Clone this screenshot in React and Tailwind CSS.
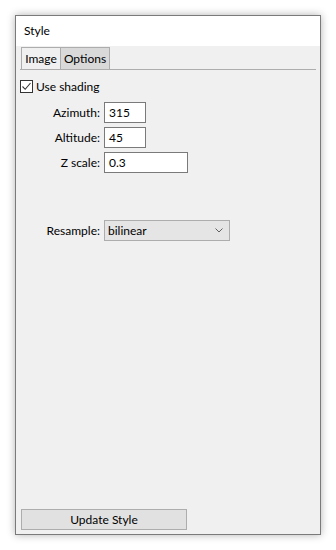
import React from "react";

const Field = ({ label, value, width }) => (
  <div className="flex items-center h-[21px]">
    <div className="w-[84px] pr-[4px] text-right">{label}</div>
    <div className={`${width} h-[21px] bg-white border border-[#7a7a7a] pl-[4px] flex items-center`}>{value}</div>
  </div>
);

const App = () => {
  return (
    <div
      className="w-[336px] h-[550px] bg-white pt-[15px] pl-[15px] text-[12px] text-black"
      style={{ fontFamily: 'Lato, sans-serif' }}
    >
      <div className="w-[306px] h-[520px] border border-[#7a7a7a] bg-[#f0f0f0] shadow-[0_0_8px_rgba(0,0,0,0.3)] flex flex-col">
        {/* title */}
        <div className="h-[30px] bg-white pl-[8px] flex items-center">Style</div>

        <div className="flex-1 flex flex-col px-[4px] pt-[1px] pb-[4px]">
          {/* tabs */}
          <div className="flex border-b border-[#adadad] pl-[1px]">
            <div className="w-[40px] h-[22px] border border-b-0 border-[#adadad] flex items-center justify-center">Image</div>
            <div className="w-[49px] h-[22px] border border-l-0 border-b-0 border-[#adadad] bg-[#d9d9d9] flex items-center justify-center">Options</div>
          </div>

          {/* checkbox */}
          <div className="flex items-center gap-[3px] mt-[10px] h-[13px]">
            <div className="w-[13px] h-[13px] bg-white border border-[#333] flex items-center justify-center">
              <svg width="11" height="11" viewBox="0 0 11 11">
                <path d="M1.5 5.5 L4.2 8.3 L9.5 2" fill="none" stroke="#333" strokeWidth="1.1" />
              </svg>
            </div>
            <span>Use shading</span>
          </div>

          {/* fields */}
          <div className="flex flex-col gap-[4px] mt-[9px]">
            <Field label="Azimuth:" value="315" width="w-[42px]" />
            <Field label="Altitude:" value="45" width="w-[42px]" />
            <Field label="Z scale:" value="0.3" width="w-[84px]" />
          </div>

          {/* resample */}
          <div className="flex items-center h-[21px] mt-[47px]">
            <div className="w-[84px] pr-[4px] text-right">Resample:</div>
            <div className="w-[126px] h-[21px] bg-[#e5e5e5] border border-[#adadad] pl-[3px] pr-[6px] flex items-center justify-between">
              <span>bilinear</span>
              <svg width="8" height="5" viewBox="0 0 8 5">
                <path d="M0.5 0.5 L4 4 L7.5 0.5" fill="none" stroke="#606060" strokeWidth="1" />
              </svg>
            </div>
          </div>

          <div className="flex-1" />

          {/* button */}
          <div className="ml-[1px] w-[166px] h-[21px] bg-[#e1e1e1] border border-[#adadad] flex items-center justify-center">
            Update Style
          </div>
        </div>
      </div>
    </div>
  );
};

export default App;
